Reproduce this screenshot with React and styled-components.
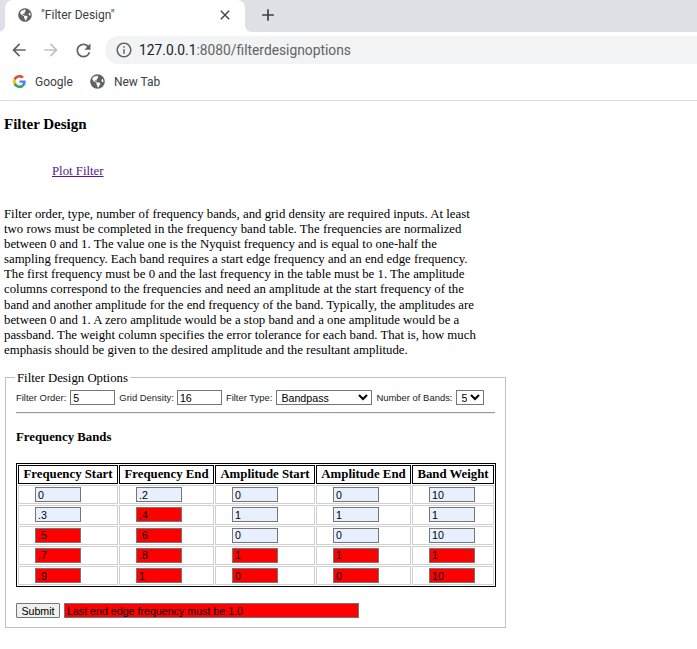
import React from 'react';
import styled, { createGlobalStyle } from 'styled-components';
import { FaGlobeAmericas } from 'react-icons/fa';
import { MdArrowBack, MdArrowForward, MdRefresh, MdInfoOutline, MdClose, MdAdd } from 'react-icons/md';

const GlobalStyle = createGlobalStyle`
  html, body { margin: 0; padding: 0; background: #fff; }
  body { font-family: "Liberation Serif", serif; font-size: 12.8px; color: #000; overflow: hidden; }
`;

const Page = styled.div`
  width: 697px;
  height: 649px;
  overflow: hidden;
`;

const TabStrip = styled.div`
  height: 32px;
  background: #dee1e6;
  display: flex;
  align-items: flex-end;
  padding-left: 5px;
`;

const Tab = styled.div`
  position: relative;
  width: 240px;
  height: 32px;
  box-sizing: border-box;
  background: #fff;
  border-radius: 8px 8px 0 0;
  display: flex;
  align-items: center;
  padding: 0 12px 2px 13px;
  color: #3c4043;
  font: 12px Roboto, sans-serif;

  &::before, &::after {
    content: "";
    position: absolute;
    bottom: 0;
    width: 6px;
    height: 6px;
  }
  &::before { left: -6px; background: radial-gradient(circle at 0 0, #dee1e6 5.5px, #fff 6px); }
  &::after { right: -6px; background: radial-gradient(circle at 100% 0, #dee1e6 5.5px, #fff 6px); }
`;

const TabTitle = styled.span`
  flex: 1;
  margin-left: 9px;
`;

const NewTab = styled.div`
  margin: 0 0 1px 13px;
  height: 32px;
  display: flex;
  align-items: center;
  color: #3c4043;
`;

const Toolbar = styled.div`
  height: 32px;
  display: flex;
  align-items: flex-end;
  padding-left: 9px;
`;

const NavIcon = styled.div`
  width: 32px;
  height: 28px;
  display: flex;
  align-items: center;
  color: ${props => props.$off ? '#bdc1c6' : '#5f6368'};
`;

const Omnibox = styled.div`
  flex: 1;
  height: 28px;
  background: #f1f3f4;
  border-radius: 14px 0 0 14px;
  display: flex;
  align-items: center;
  padding-left: 10px;
  color: #5f6368;
  font: 13.8px Roboto, sans-serif;
`;

const Host = styled.span`
  margin-left: 6px;
  color: #202124;
`;

const Bookmarks = styled.div`
  height: 37px;
  box-sizing: border-box;
  border-bottom: 1px solid #dadce0;
  display: flex;
  align-items: center;
  padding: 0 0 1px 13px;
  font: 12px Roboto, sans-serif;
  color: #3c4043;
`;

const Bookmark = styled.div`
  display: flex;
  align-items: center;
  gap: 9px;
  margin-right: 17px;
`;

const Content = styled.div`
  padding: 15px 0 0 4px;
`;

const Title = styled.h3`
  margin: 0;
  font-size: 15px;
  line-height: 17px;
`;

const PlotLink = styled.a`
  display: block;
  margin: 31px 0 0 48px;
  line-height: 14px;
  color: #551a8b;
  text-decoration: underline;
`;

const Intro = styled.p`
  width: 472px;
  margin: 29px 0 0;
  line-height: 15.1px;
`;

const Options = styled.fieldset`
  width: 501px;
  min-width: 0;
  box-sizing: border-box;
  height: 257px;
  margin: 13px 0 0 1px;
  padding: 0 10px;
  border: 1px solid #c0c0c0;
`;

const Legend = styled.legend`
  padding: 0 2px;
  margin-left: -1px;
  line-height: 14px;
`;

const OptionRow = styled.div`
  display: flex;
  align-items: center;
  height: 16px;
  margin-top: 5px;
  font: 9.45px "Liberation Sans", sans-serif;
  color: #222;
  white-space: nowrap;
`;

const OptionLabel = styled.label`
  margin-right: ${props => props.$gap || 3}px;
  margin-left: ${props => props.$lead || 0}px;
`;

const Field = styled.input`
  box-sizing: border-box;
  flex: none;
  width: ${props => props.$w}px;
  height: 15px;
  margin: 0;
  padding: 0 2px;
  border: 1px solid #767676;
  background: ${props => props.$bg || '#fff'};
  font: 10.67px "Liberation Sans", sans-serif;
  color: #000;
  border-radius: 0;
  outline: none;
`;

const Picker = styled.select`
  box-sizing: border-box;
  flex: none;
  width: ${props => props.$w}px;
  height: 15px;
  margin: 0;
  padding: 0;
  border: 1px solid #767676;
  background: #fff;
  font: 10.67px "Liberation Sans", sans-serif;
  color: #000;
  border-radius: 0;
`;

const Rule = styled.hr`
  margin: 6px 0 0;
  border: none;
  border-top: 1px solid #9a9a9a;
  border-bottom: 1px solid #eeeeee;
  height: 0;
`;

const BandsTitle = styled.h4`
  margin: 16px 0 0;
  font-size: 12.8px;
  line-height: 15px;
`;

const BandTable = styled.table`
  width: 480px;
  margin-top: 18px;
  table-layout: fixed;
  border-collapse: separate;
  border-spacing: 1px;
  border: 1px solid #000;
`;

const HeadCell = styled.th`
  box-sizing: border-box;
  width: ${props => props.$w}px;
  height: 19px;
  padding: 0;
  border: 1px solid #000;
  font-size: 12.8px;
  font-weight: bold;
  text-align: center;
  white-space: nowrap;
`;

const BandCell = styled.td`
  box-sizing: border-box;
  height: 19.3px;
  padding: 0 0 0 16px;
  border: 1px solid #d0d0d0;
  text-align: left;
  line-height: 0;
`;

const SubmitRow = styled.div`
  display: flex;
  align-items: center;
  gap: 4px;
  margin-top: 16px;
`;

const SubmitButton = styled.button`
  box-sizing: border-box;
  width: 44px;
  height: 15px;
  padding: 0;
  border: 1px solid #767676;
  border-radius: 1px;
  background: #efefef;
  font: 10.67px "Liberation Sans", sans-serif;
  color: #000;
`;

const Globe = ({ size = 14 }) => <FaGlobeAmericas size={size} color="#5f6368" />;

const GoogleMark = () => (
  <svg width="13" height="13" viewBox="0 0 48 48">
    <path fill="#EA4335" d="M24 9.5c3.5 0 6.700 1.200 9.200 3.600l6.900-6.900C35.900 2.400 30.500 0 24 0 14.600 0 6.500 5.400 2.600 13.200l8 6.200C12.500 13.700 17.800 9.500 24 9.500z" />
    <path fill="#4285F4" d="M46.900 24.500c0-1.600-.1-3.100-.4-4.500H24v9h12.900c-.6 3-2.200 5.500-4.700 7.200l7.700 6c4.500-4.200 7-10.300 7-17.700z" />
    <path fill="#FBBC05" d="M10.600 28.600c-.5-1.400-.8-3-.8-4.600s.3-3.200.8-4.600l-8-6.200C.9 16.500 0 20.100 0 24s.9 7.500 2.600 10.800l8-6.200z" />
    <path fill="#34A853" d="M24 48c6.500 0 11.900-2.100 15.900-5.800l-7.700-6c-2.100 1.500-4.900 2.300-8.200 2.300-6.200 0-11.500-4.200-13.400-9.900l-8 6.200C6.500 42.600 14.600 48 24 48z" />
  </svg>
);

const columns = [
  { name: 'Frequency Start', width: 100 },
  { name: 'Frequency End', width: 95 },
  { name: 'Amplitude Start', width: 100 },
  { name: 'Amplitude End', width: 95 },
  { name: 'Band Weight', width: 82 },
];

const rows = [
  [['0'], ['.2'], ['0'], ['0'], ['10']],
  [['.3'], ['.4', 1], ['1'], ['1'], ['1']],
  [['.5', 1], ['.6', 1], ['0'], ['0'], ['10']],
  [['.7', 1], ['.8', 1], ['1', 1], ['1', 1], ['1', 1]],
  [['.9', 1], ['1', 1], ['0', 1], ['0', 1], ['10', 1]],
];

const App = () => (
  <Page>
    <GlobalStyle />
    <TabStrip>
      <Tab>
        <Globe />
        <TabTitle>"Filter Design"</TabTitle>
        <MdClose size={16} color="#3c4043" />
      </Tab>
      <NewTab><MdAdd size={20} /></NewTab>
    </TabStrip>
    <Toolbar>
      <NavIcon><MdArrowBack size={20} /></NavIcon>
      <NavIcon $off><MdArrowForward size={20} /></NavIcon>
      <NavIcon><MdRefresh size={21} /></NavIcon>
      <Omnibox>
        <MdInfoOutline size={18} />
        <Host>127.0.0.1</Host>:8080/filterdesignoptions
      </Omnibox>
    </Toolbar>
    <Bookmarks>
      <Bookmark><GoogleMark /> Google</Bookmark>
      <Bookmark><Globe size={15} /> New Tab</Bookmark>
    </Bookmarks>
    <Content>
      <Title>Filter Design</Title>
      <PlotLink href="#">Plot Filter</PlotLink>
      <Intro>
        Filter order, type, number of frequency bands, and grid density are required inputs. At least
        two rows must be completed in the frequency band table. The frequencies are normalized
        between 0 and 1. The value one is the Nyquist frequency and is equal to one-half the
        sampling frequency. Each band requires a start edge frequency and an end edge frequency.
        The first frequency must be 0 and the last frequency in the table must be 1. The amplitude
        columns correspond to the frequencies and need an amplitude at the start frequency of the
        band and another amplitude for the end frequency of the band. Typically, the amplitudes are
        between 0 and 1. A zero amplitude would be a stop band and a one amplitude would be a
        passband. The weight column specifies the error tolerance for each band. That is, how much
        emphasis should be given to the desired amplitude and the resultant amplitude.
      </Intro>
      <Options>
        <Legend>Filter Design Options</Legend>
        <OptionRow>
          <OptionLabel $gap={4}>Filter Order:</OptionLabel>
          <Field $w={45} defaultValue="5" />
          <OptionLabel $lead={4}>Grid Density:</OptionLabel>
          <Field $w={45} defaultValue="16" />
          <OptionLabel $lead={4} $gap={4}>Filter Type:</OptionLabel>
          <Picker $w={96} defaultValue="Bandpass">
            <option>Bandpass</option>
            <option>Lowpass</option>
            <option>Highpass</option>
          </Picker>
          <OptionLabel $lead={4} $gap={4}>Number of Bands:</OptionLabel>
          <Picker $w={28} defaultValue="5">
            <option>2</option>
            <option>3</option>
            <option>4</option>
            <option>5</option>
          </Picker>
        </OptionRow>
        <Rule />
        <BandsTitle>Frequency Bands</BandsTitle>
        <BandTable>
          <thead>
            <tr>
              {columns.map(col => <HeadCell key={col.name} $w={col.width}>{col.name}</HeadCell>)}
            </tr>
          </thead>
          <tbody>
            {rows.map((row, r) => (
              <tr key={r}>
                {row.map(([value, bad], c) => (
                  <BandCell key={c}>
                    <Field $w={46} $bg={bad ? '#ff0000' : '#e8f0fe'} defaultValue={value} />
                  </BandCell>
                ))}
              </tr>
            ))}
          </tbody>
        </BandTable>
        <SubmitRow>
          <SubmitButton>Submit</SubmitButton>
          <Field $w={295} $bg="#ff0000" defaultValue="Last end edge frequency must be 1.0" />
        </SubmitRow>
      </Options>
    </Content>
  </Page>
);

export default App;
